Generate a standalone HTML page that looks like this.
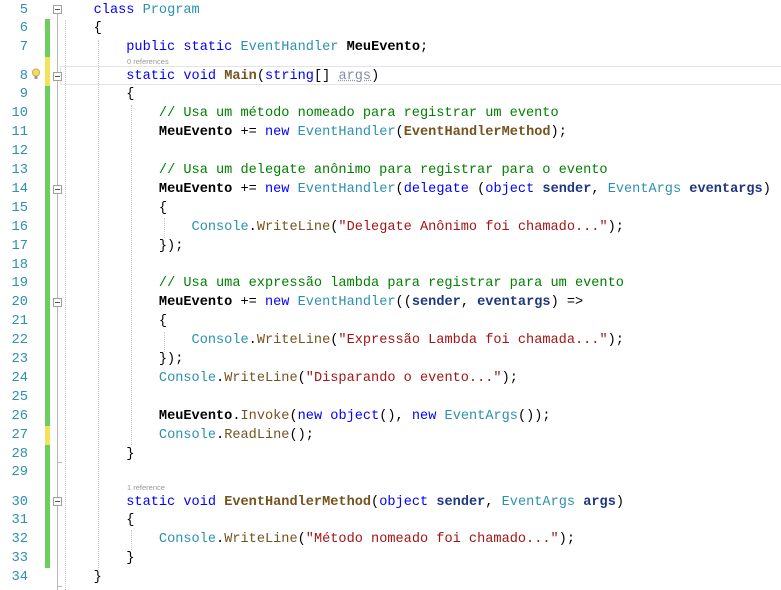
<!DOCTYPE html>
<html><head><meta charset="utf-8"><style>
body{margin:0;width:781px;height:590px;background:#fff;position:relative;overflow:hidden;font-family:"Liberation Mono",monospace;}
.n{position:absolute;left:0;width:28px;text-align:right;color:#2b91af;font-size:13.75px;line-height:19px;}
.c{position:absolute;left:61px;white-space:pre;font-size:13.6px;line-height:19px;color:#000;}
.k{color:#0000ff}.t{color:#2b91af}.m{color:#74531f}.b{font-weight:bold}.s{color:#a31515}.g{color:#008000}.p{color:#1f377f;font-weight:bold}
.lens{position:absolute;left:127px;font-family:"Liberation Sans",sans-serif;font-size:7.5px;color:#999;}
.bar{position:absolute;left:45px;width:5px}
.box{position:absolute;left:53px;width:7px;height:7px;border:1px solid #a0a0a0;background:#fff}
.box:after{content:"";position:absolute;left:1px;top:3px;width:5px;height:1px;background:#555}
.guide{position:absolute;width:0;border-left:1px dotted #c8c8c8}
</style></head><body>
<div style="position:absolute;left:57px;top:14px;width:1px;height:576px;background:#b8b8b8"></div>
<div style="position:absolute;left:57px;top:462px;width:5px;height:1px;background:#b8b8b8"></div>
<div style="position:absolute;left:57px;top:586px;width:5px;height:1px;background:#b8b8b8"></div>
<div style="position:absolute;left:60px;top:66px;width:722px;height:19px;border:1px solid #e4e4e4;box-sizing:border-box"></div>
<div class="guide" style="left:65px;top:20px;height:570px"></div>
<div class="guide" style="left:98px;top:40px;height:530px"></div>
<div class="guide" style="left:131px;top:105px;height:340px"></div>
<div class="guide" style="left:131px;top:530px;height:20px"></div>
<div class="guide" style="left:164px;top:218px;height:20px"></div>
<div class="guide" style="left:164px;top:332px;height:20px"></div>
<div class="bar" style="top:19px;height:38px;background:#6cce5f"></div>
<div class="bar" style="top:57px;height:29px;background:#f2e35a"></div>
<div class="bar" style="top:86px;height:340px;background:#6cce5f"></div>
<div class="bar" style="top:426px;height:19px;background:#f2e35a"></div>
<div class="bar" style="top:445px;height:123px;background:#6cce5f"></div>
<div class="box" style="top:5px"></div><div class="box" style="top:72px"></div><div class="box" style="top:185px"></div><div class="box" style="top:298px"></div><div class="box" style="top:497px"></div>
<svg style="position:absolute;left:31px;top:68px" width="10" height="13"><circle cx="5" cy="4.5" r="3.6" fill="#f5d86a" stroke="#c9a227" stroke-width="0.8"/><rect x="3.5" y="8" width="3" height="3" fill="#999"/></svg>
<div class="n" style="top:0.5px">5</div><div class="c" style="top:0.5px">    <span class="k">class</span> <span class="t">Program</span></div>
<div class="n" style="top:19.4px">6</div><div class="c" style="top:19.4px">    {</div>
<div class="n" style="top:38.3px">7</div><div class="c" style="top:38.3px">        <span class="k">public</span> <span class="k">static</span> <span class="t">EventHandler</span> <span class="b">MeuEvento</span>;</div>
<div class="lens" style="top:57px">0 references</div>
<div class="n" style="top:66.5px">8</div><div class="c" style="top:66.5px">        <span class="k">static</span> <span class="k">void</span> <span class="m b">Main</span>(<span class="k">string</span>[] <span style="color:#7f8fa8;text-decoration:underline dotted #999">args</span>)</div>
<div class="n" style="top:85.4px">9</div><div class="c" style="top:85.4px">        {</div>
<div class="n" style="top:104.3px">10</div><div class="c" style="top:104.3px">            <span class="g">// Usa um método nomeado para registrar um evento</span></div>
<div class="n" style="top:123.2px">11</div><div class="c" style="top:123.2px">            <span class="b">MeuEvento</span> += <span class="k">new</span> <span class="t">EventHandler</span>(<span class="m b">EventHandlerMethod</span>);</div>
<div class="n" style="top:142.1px">12</div>
<div class="n" style="top:161px">13</div><div class="c" style="top:161px">            <span class="g">// Usa um delegate anônimo para registrar para o evento</span></div>
<div class="n" style="top:179.9px">14</div><div class="c" style="top:179.9px">            <span class="b">MeuEvento</span> += <span class="k">new</span> <span class="t">EventHandler</span>(<span class="k">delegate</span> (<span class="k">object</span> <span class="p">sender</span>, <span class="t">EventArgs</span> <span class="p">eventargs</span>)</div>
<div class="n" style="top:198.8px">15</div><div class="c" style="top:198.8px">            {</div>
<div class="n" style="top:217.7px">16</div><div class="c" style="top:217.7px">                <span class="t">Console</span>.<span class="m">WriteLine</span>(<span class="s">"Delegate Anônimo foi chamado..."</span>);</div>
<div class="n" style="top:236.6px">17</div><div class="c" style="top:236.6px">            });</div>
<div class="n" style="top:255.5px">18</div>
<div class="n" style="top:274.4px">19</div><div class="c" style="top:274.4px">            <span class="g">// Usa uma expressão lambda para registrar para um evento</span></div>
<div class="n" style="top:293.3px">20</div><div class="c" style="top:293.3px">            <span class="b">MeuEvento</span> += <span class="k">new</span> <span class="t">EventHandler</span>((<span class="p">sender</span>, <span class="p">eventargs</span>) =&gt;</div>
<div class="n" style="top:312.2px">21</div><div class="c" style="top:312.2px">            {</div>
<div class="n" style="top:331.1px">22</div><div class="c" style="top:331.1px">                <span class="t">Console</span>.<span class="m">WriteLine</span>(<span class="s">"Expressão Lambda foi chamada..."</span>);</div>
<div class="n" style="top:350px">23</div><div class="c" style="top:350px">            });</div>
<div class="n" style="top:368.9px">24</div><div class="c" style="top:368.9px">            <span class="t">Console</span>.<span class="m">WriteLine</span>(<span class="s">"Disparando o evento..."</span>);</div>
<div class="n" style="top:387.8px">25</div>
<div class="n" style="top:406.7px">26</div><div class="c" style="top:406.7px">            <span class="b">MeuEvento</span>.<span class="m">Invoke</span>(<span class="k">new</span> <span class="k">object</span>(), <span class="k">new</span> <span class="t">EventArgs</span>());</div>
<div class="n" style="top:425.6px">27</div><div class="c" style="top:425.6px">            <span class="t">Console</span>.<span class="m">ReadLine</span>();</div>
<div class="n" style="top:444.5px">28</div><div class="c" style="top:444.5px">        }</div>
<div class="n" style="top:463.4px">29</div>
<div class="lens" style="top:483px">1 reference</div>
<div class="n" style="top:492.5px">30</div><div class="c" style="top:492.5px">        <span class="k">static</span> <span class="k">void</span> <span class="m b">EventHandlerMethod</span>(<span class="k">object</span> <span class="p">sender</span>, <span class="t">EventArgs</span> <span class="p">args</span>)</div>
<div class="n" style="top:511.4px">31</div><div class="c" style="top:511.4px">        {</div>
<div class="n" style="top:530.3px">32</div><div class="c" style="top:530.3px">            <span class="t">Console</span>.<span class="m">WriteLine</span>(<span class="s">"Método nomeado foi chamado..."</span>);</div>
<div class="n" style="top:549.2px">33</div><div class="c" style="top:549.2px">        }</div>
<div class="n" style="top:568.1px">34</div><div class="c" style="top:568.1px">    }</div>
</body></html>
